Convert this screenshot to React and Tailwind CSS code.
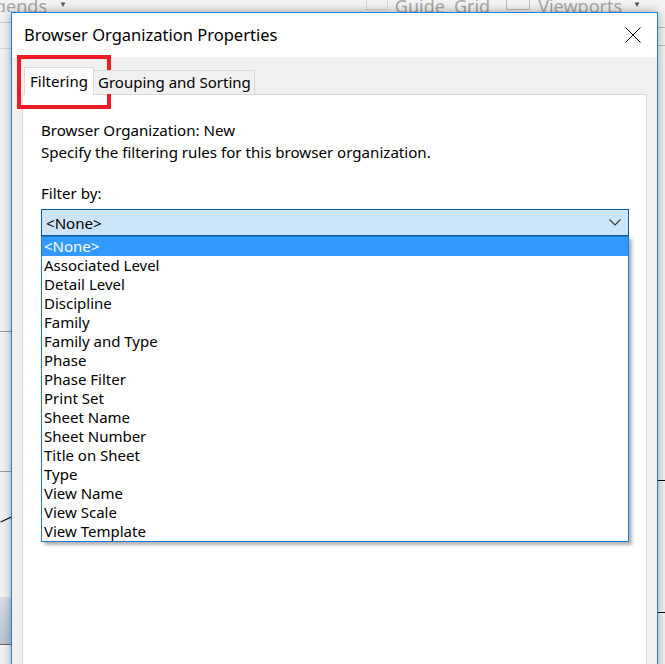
const ITEMS = [
  '<None>',
  'Associated Level',
  'Detail Level',
  'Discipline',
  'Family',
  'Family and Type',
  'Phase',
  'Phase Filter',
  'Print Set',
  'Sheet Name',
  'Sheet Number',
  'Title on Sheet',
  'Type',
  'View Name',
  'View Scale',
  'View Template',
]

function Backdrop() {
  // the app window that sits behind the dialog
  return (
    <div className="absolute inset-0 flex flex-col">
      <div className="h-[12px] shrink-0 flex items-end overflow-hidden text-[18px] leading-[18px] text-[#a8a8a8]">
        <span className="-ml-[5px] -mb-[3px]">gends</span>
        <span className="ml-[12px] mb-[4px] text-[8px] leading-none text-[#555]">▼</span>
        <div className="ml-auto mr-[24px] flex items-end -mb-[3px]">
          <span className="w-[22px] h-[14px] mb-[5px] border border-dotted border-[#bdbdbd]" />
          <span className="ml-[7px]">Guide</span>
          <span className="ml-[9px]">Grid</span>
          <span className="ml-[16px] w-[24px] h-[14px] mb-[5px] border border-[#bdbdbd]" />
          <span className="ml-[8px]">Viewports</span>
          <span className="ml-[11px] mb-[7px] text-[8px] leading-none text-[#555]">▼</span>
        </div>
      </div>
      <div className="flex-1 flex justify-between">
        <div className="w-[11px] flex flex-col">
          <div className="h-[10px]" />
          <div className="h-px bg-[#c9c9c9]" />
          <div className="h-[25px]" />
          <div className="h-px bg-[#d5d5d5]" />
          <div className="h-[282px]" />
          <div className="h-px bg-[#9a9a9a]" />
          <div className="h-[139px]" />
          <div className="h-px bg-[#9a9a9a]" />
          <div className="h-[47px]" />
          <div className="h-px w-[12px] bg-black rotate-[-25deg]" />
          <div className="h-[77px]" />
          <div className="h-[48px] bg-gradient-to-b from-[#d7dee6] to-[#b9c5d1] border-b border-[#6a6a6a]" />
        </div>
        <div className="w-[7px] flex flex-col">
          <div className="h-[15px]" />
          <div className="h-px bg-[#bdbdbd]" />
          <div className="h-[17px]" />
          <div className="h-px bg-[#bdbdbd]" />
          <div className="h-[434px]" />
          <div className="h-px bg-black" />
          <div className="h-[131px]" />
          <div className="h-px bg-black" />
        </div>
      </div>
    </div>
  )
}

export default function App() {
  return (
    <div className="relative w-[665px] h-[664px] overflow-hidden bg-[#f4f4f4] font-['Noto_Sans',sans-serif] text-black">
      <Backdrop />

      {/* Dialog */}
      <div className="absolute left-[11px] top-[12px] w-[647px] h-[720px] flex flex-col border border-[#1883d7] bg-[#f0f0f0] shadow-[0_0_10px_rgba(0,0,0,0.35)]">
        <div className="h-[44px] shrink-0 flex items-center justify-between bg-white pl-[12px] pr-[16px]">
          <span className="text-[16.5px] leading-none">Browser Organization Properties</span>
          <svg width="16" height="16" viewBox="0 0 16 16" className="text-black">
            <path d="M0.5 0.5L15.5 15.5M15.5 0.5L0.5 15.5" stroke="currentColor" strokeWidth="1" fill="none" />
          </svg>
        </div>

        <div className="flex-1 flex flex-col px-[10px] pt-[10px]">
          {/* Tabs */}
          <div className="relative z-10 flex items-end h-[27px] pl-[2px] text-[15px]">
            <div className="h-[28px] w-[70px] -mb-px pl-[5px] pt-[1px] bg-white border border-b-0 border-[#d9d9d9] whitespace-nowrap leading-[24px]">
              Filtering
            </div>
            <div className="h-[24px] w-[161px] pl-[4px] bg-[#f0f0f0] border border-l-0 border-b-0 border-[#d9d9d9] whitespace-nowrap leading-[23px]">
              Grouping and Sorting
            </div>
          </div>

          {/* Tab panel */}
          <div className="flex-1 bg-white border border-[#d9d9d9] pl-[18px] pr-[17px] pt-[24px] text-[15.1px] leading-[22px]">
            <p>Browser Organization: New</p>
            <p>Specify the filtering rules for this browser organization.</p>
            <p className="mt-[19px]">Filter by:</p>

            <div className="relative mt-[5px]">
              <div className="h-[27px] flex items-center justify-between border border-[#0a5a9c] bg-[#cce4f7] pl-[4px] pr-[7px]">
                <span>&lt;None&gt;</span>
                <svg width="12" height="7" viewBox="0 0 12 7">
                  <path d="M0.5 0.5L6 6L11.5 0.5" stroke="#3a3a3a" strokeWidth="1.2" fill="none" />
                </svg>
              </div>

              {/* Open dropdown list */}
              <ul className="absolute left-0 right-0 top-full z-20 border border-[#1a7bd0] bg-white shadow-[3px_3px_3px_rgba(0,0,0,0.3)] text-[15px]">
                {ITEMS.map((item, i) => (
                  <li
                    key={item}
                    className={`h-[19px] pl-[2px] leading-[19px] whitespace-nowrap ${i === 0 ? 'bg-[#3399ff] text-white' : ''}`}
                  >
                    {item}
                  </li>
                ))}
              </ul>
            </div>
          </div>
        </div>
      </div>

      {/* Red highlight around the active tab */}
      <div className="absolute left-[17px] top-[55px] w-[94px] h-[54px] border-[4px] border-[#ed1c24]" />
    </div>
  )
}
